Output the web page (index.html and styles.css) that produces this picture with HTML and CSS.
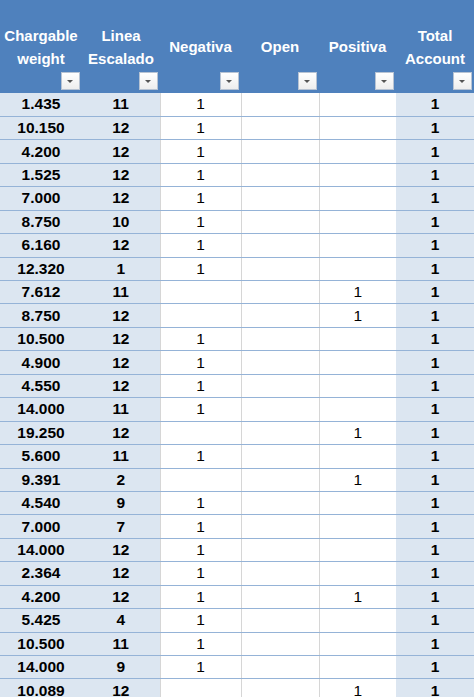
FILE: index.html
```html
<!DOCTYPE html>
<html>
<head>
<meta charset="utf-8">
<link rel="stylesheet" href="styles.css">
</head>
<body>
<table class="sheet">
<colgroup>
<col class="c1"><col class="c2"><col class="c3"><col class="c4"><col class="c5"><col class="c6">
</colgroup>
<thead>
<tr>
<th><span class="lbl">Chargable<br>weight</span><span class="filter"></span></th>
<th><span class="lbl">Linea<br>Escalado</span><span class="filter"></span></th>
<th><span class="lbl">Negativa</span><span class="filter"></span></th>
<th><span class="lbl">Open</span><span class="filter"></span></th>
<th><span class="lbl">Positiva</span><span class="filter"></span></th>
<th><span class="lbl">Total<br>Account</span><span class="filter"></span></th>
</tr>
</thead>
<tbody>
<tr><td class="b">1.435</td><td class="b">11</td><td class="w">1</td><td class="w"></td><td class="w"></td><td class="t">1</td></tr>
<tr><td class="b">10.150</td><td class="b">12</td><td class="w">1</td><td class="w"></td><td class="w"></td><td class="t">1</td></tr>
<tr><td class="b">4.200</td><td class="b">12</td><td class="w">1</td><td class="w"></td><td class="w"></td><td class="t">1</td></tr>
<tr><td class="b">1.525</td><td class="b">12</td><td class="w">1</td><td class="w"></td><td class="w"></td><td class="t">1</td></tr>
<tr><td class="b">7.000</td><td class="b">12</td><td class="w">1</td><td class="w"></td><td class="w"></td><td class="t">1</td></tr>
<tr><td class="b">8.750</td><td class="b">10</td><td class="w">1</td><td class="w"></td><td class="w"></td><td class="t">1</td></tr>
<tr><td class="b">6.160</td><td class="b">12</td><td class="w">1</td><td class="w"></td><td class="w"></td><td class="t">1</td></tr>
<tr><td class="b">12.320</td><td class="b">1</td><td class="w">1</td><td class="w"></td><td class="w"></td><td class="t">1</td></tr>
<tr><td class="b">7.612</td><td class="b">11</td><td class="w"></td><td class="w"></td><td class="w">1</td><td class="t">1</td></tr>
<tr><td class="b">8.750</td><td class="b">12</td><td class="w"></td><td class="w"></td><td class="w">1</td><td class="t">1</td></tr>
<tr><td class="b">10.500</td><td class="b">12</td><td class="w">1</td><td class="w"></td><td class="w"></td><td class="t">1</td></tr>
<tr><td class="b">4.900</td><td class="b">12</td><td class="w">1</td><td class="w"></td><td class="w"></td><td class="t">1</td></tr>
<tr><td class="b">4.550</td><td class="b">12</td><td class="w">1</td><td class="w"></td><td class="w"></td><td class="t">1</td></tr>
<tr><td class="b">14.000</td><td class="b">11</td><td class="w">1</td><td class="w"></td><td class="w"></td><td class="t">1</td></tr>
<tr><td class="b">19.250</td><td class="b">12</td><td class="w"></td><td class="w"></td><td class="w">1</td><td class="t">1</td></tr>
<tr><td class="b">5.600</td><td class="b">11</td><td class="w">1</td><td class="w"></td><td class="w"></td><td class="t">1</td></tr>
<tr><td class="b">9.391</td><td class="b">2</td><td class="w"></td><td class="w"></td><td class="w">1</td><td class="t">1</td></tr>
<tr><td class="b">4.540</td><td class="b">9</td><td class="w">1</td><td class="w"></td><td class="w"></td><td class="t">1</td></tr>
<tr><td class="b">7.000</td><td class="b">7</td><td class="w">1</td><td class="w"></td><td class="w"></td><td class="t">1</td></tr>
<tr><td class="b">14.000</td><td class="b">12</td><td class="w">1</td><td class="w"></td><td class="w"></td><td class="t">1</td></tr>
<tr><td class="b">2.364</td><td class="b">12</td><td class="w">1</td><td class="w"></td><td class="w"></td><td class="t">1</td></tr>
<tr><td class="b">4.200</td><td class="b">12</td><td class="w">1</td><td class="w"></td><td class="w">1</td><td class="t">1</td></tr>
<tr><td class="b">5.425</td><td class="b">4</td><td class="w">1</td><td class="w"></td><td class="w"></td><td class="t">1</td></tr>
<tr><td class="b">10.500</td><td class="b">11</td><td class="w">1</td><td class="w"></td><td class="w"></td><td class="t">1</td></tr>
<tr><td class="b">14.000</td><td class="b">9</td><td class="w">1</td><td class="w"></td><td class="w"></td><td class="t">1</td></tr>
<tr><td class="b">10.089</td><td class="b">12</td><td class="w"></td><td class="w"></td><td class="w">1</td><td class="t">1</td></tr>
</tbody>
</table>
</body>
</html>
```
FILE: styles.css
```css
html, body {
  margin: 0;
  padding: 0;
  background: #ffffff;
  overflow: hidden;
}
.sheet {
  border-collapse: collapse;
  table-layout: fixed;
  width: 474px;
  font-family: "Liberation Sans", Arial, sans-serif;
  font-size: 15.5px;
  color: #000000;
}
.c1 { width: 82px; }
.c2 { width: 78px; }
.c3 { width: 81px; }
.c4 { width: 78px; }
.c5 { width: 77px; }
.c6 { width: 78px; }
.sheet th {
  position: relative;
  height: 93px;
  padding: 0;
  background: #4f81bd;
  color: #ffffff;
  font-weight: bold;
  font-size: 15px;
  line-height: 23px;
  text-align: center;
  vertical-align: middle;
}
.lbl {
  display: block;
  padding-bottom: 0;
}
.filter {
  position: absolute;
  right: 2px;
  bottom: 3px;
  width: 17px;
  height: 16px;
  border: 1px solid #b7c3d3;
  background: linear-gradient(#ffffff, #eeeeee);
}
.filter::after {
  content: "";
  position: absolute;
  left: 5px;
  top: 7px;
  border-left: 3.5px solid transparent;
  border-right: 3.5px solid transparent;
  border-top: 3.5px solid #555555;
}
.sheet td {
  height: 23.45px;
  padding: 0;
  box-sizing: border-box;
  text-align: center;
  vertical-align: middle;
  border-bottom: 1px solid #95b3d7;
  line-height: 20px;
}
.b {
  background: #dce6f1;
  font-weight: bold;
}
.w {
  background: #ffffff;
  border-left: 1px solid #d6d6d6;
}
.t {
  background: #dce6f1;
  font-weight: bold;
}
```
